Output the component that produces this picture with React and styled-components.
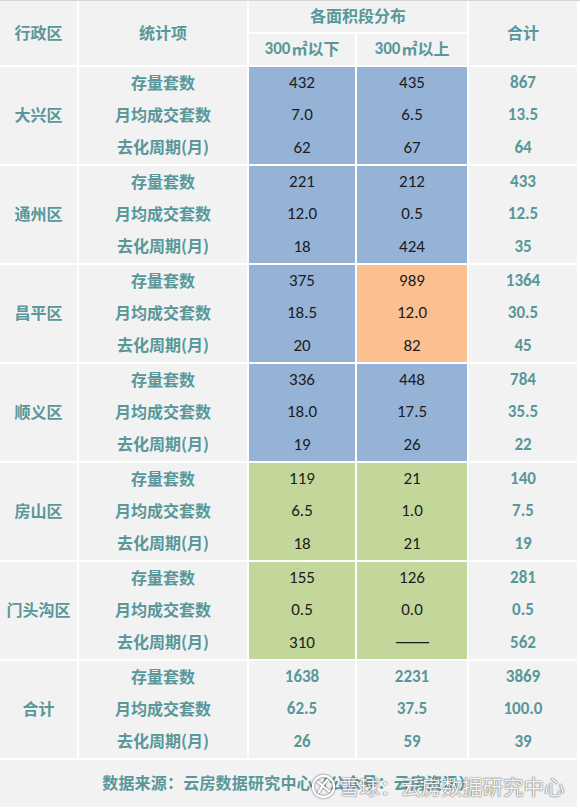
import React from "react";
import styled, { createGlobalStyle } from "styled-components";

const Global = createGlobalStyle`
  html, body { margin: 0; padding: 0; background: #ffffff; }
  body { width: 580px; height: 808px; overflow: hidden; }
`;

const TEAL = "#58979a";
const CJK = `"Noto Sans CJK SC", "Microsoft YaHei", sans-serif`;
const NUM = `Carlito, Lato, "Noto Sans CJK SC", sans-serif`;

const Page = styled.div`
  position: relative;
  width: 580px;
  height: 808px;
  background: #ffffff;
  border-top: 1px solid #d6d6d6;
  box-sizing: border-box;
`;

const Table = styled.div`
  display: grid;
  width: 577px;
  grid-template-columns: 77px 168px 106px 110px 108px;
  grid-template-rows: 31px 31px repeat(7, 97px) 47px;
  gap: 2px;
`;

const Cell = styled.div`
  background: ${(p) => p.$bg || "#f2f2f2"};
  display: flex;
  align-items: center;
  justify-content: center;
  font-family: ${CJK};
  font-weight: 700;
  font-size: 16px;
  color: ${TEAL};
  padding-bottom: 3px;
  box-sizing: border-box;
  grid-column: ${(p) => p.$col || "auto"};
  grid-row: ${(p) => p.$row || "auto"};
`;

const Stack = styled.div`
  background: ${(p) => p.$bg || "#f2f2f2"};
  display: grid;
  grid-template-rows: repeat(3, 1fr);
`;

const Line = styled.div`
  display: flex;
  align-items: center;
  justify-content: center;
  font-family: ${(p) => (p.$label ? CJK : NUM)};
  font-weight: ${(p) => (p.$bold ? 700 : 400)};
  font-size: ${(p) => (p.$label ? "16px" : "17px")};
  color: ${(p) => (p.$bold ? TEAL : "#1c1c1c")};
  padding-bottom: ${(p) => (p.$label ? "3px" : "1px")};
`;

const Dash = styled.span`
  font-family: "Liberation Sans", sans-serif;
  font-size: 17px;
  color: #1c1c1c;
  letter-spacing: -1px;
`;

const HeadNum = styled.span`
  font-family: ${NUM};
  font-size: 17px;
  margin-right: 1px;
`;

const Footer = styled(Cell)`
  grid-column: 1 / 6;
  padding-bottom: 4px;
  letter-spacing: 0.2px;
`;

const Watermark = styled.div`
  position: absolute;
  left: 311px;
  top: 770px;
  display: flex;
  align-items: center;
  gap: 3px;
  font-family: ${CJK};
  font-size: 20.5px;
  font-weight: 400;
  color: rgba(255, 255, 255, 0.94);
  text-shadow: 0 0 1px rgba(50, 50, 50, 0.8), 0 0 2px rgba(50, 50, 50, 0.5);
`;

const LABELS = ["存量套数", "月均成交套数", "去化周期(月)"];

const BLUE = "#95b3d7";
const ORANGE = "#fac090";
const GREEN = "#c4d79b";

const groups = [
  { name: "大兴区", a: ["432", "7.0", "62"], b: ["435", "6.5", "67"], t: ["867", "13.5", "64"], ca: BLUE, cb: BLUE },
  { name: "通州区", a: ["221", "12.0", "18"], b: ["212", "0.5", "424"], t: ["433", "12.5", "35"], ca: BLUE, cb: BLUE },
  { name: "昌平区", a: ["375", "18.5", "20"], b: ["989", "12.0", "82"], t: ["1364", "30.5", "45"], ca: BLUE, cb: ORANGE },
  { name: "顺义区", a: ["336", "18.0", "19"], b: ["448", "17.5", "26"], t: ["784", "35.5", "22"], ca: BLUE, cb: BLUE },
  { name: "房山区", a: ["119", "6.5", "18"], b: ["21", "1.0", "21"], t: ["140", "7.5", "19"], ca: GREEN, cb: GREEN },
  { name: "门头沟区", a: ["155", "0.5", "310"], b: ["126", "0.0", "——"], t: ["281", "0.5", "562"], ca: GREEN, cb: GREEN },
  { name: "合计", a: ["1638", "62.5", "26"], b: ["2231", "37.5", "59"], t: ["3869", "100.0", "39"], bold: true },
];

function Logo() {
  return (
    <svg width="25" height="25" viewBox="0 0 26 26" style={{ filter: "drop-shadow(0 0 1px rgba(50,50,50,0.8))" }}>
      <circle cx="13" cy="13" r="11" fill="none" stroke="#fff" strokeWidth="2.2" />
      <path d="M7 8 C11 11, 15 15, 19 18" fill="none" stroke="#fff" strokeWidth="2.2" strokeLinecap="round" />
      <path d="M17 6 C13 10, 11 14, 8 19" fill="none" stroke="#fff" strokeWidth="2.2" strokeLinecap="round" />
    </svg>
  );
}

export default function App() {
  return (
    <Page>
      <Global />
      <Table>
        <Cell $row="1 / 3">行政区</Cell>
        <Cell $row="1 / 3">统计项</Cell>
        <Cell $col="3 / 5">各面积段分布</Cell>
        <Cell $row="1 / 3" $col="5">合计</Cell>
        <Cell $row="2" $col="3"><HeadNum>300</HeadNum>㎡以下</Cell>
        <Cell $row="2" $col="4"><HeadNum>300</HeadNum>㎡以上</Cell>
        {groups.map((g) => (
          <React.Fragment key={g.name}>
            <Cell>{g.name}</Cell>
            <Stack>
              {LABELS.map((l) => (
                <Line key={l} $label $bold>{l}</Line>
              ))}
            </Stack>
            <Stack $bg={g.ca}>
              {g.a.map((v, i) => (
                <Line key={i} $bold={g.bold}>{v}</Line>
              ))}
            </Stack>
            <Stack $bg={g.cb}>
              {g.b.map((v, i) => (
                <Line key={i} $bold={g.bold}>
                  {v === "——" ? <Dash>{v}</Dash> : v}
                </Line>
              ))}
            </Stack>
            <Stack>
              {g.t.map((v, i) => (
                <Line key={i} $bold>{v}</Line>
              ))}
            </Stack>
          </React.Fragment>
        ))}
        <Footer>数据来源：云房数据研究中心（公众号：云房资讯）</Footer>
      </Table>
      <Watermark>
        <Logo />
        <span>雪球：云房数据研究中心</span>
      </Watermark>
    </Page>
  );
}
